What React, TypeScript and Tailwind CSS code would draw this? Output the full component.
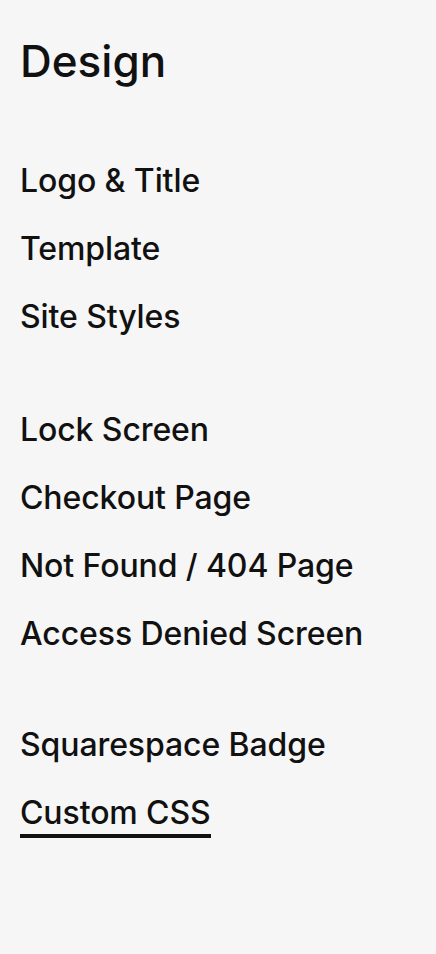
export default function App() {
  const groups = [
    { mt: "mt-[74px]", items: ["Logo & Title", "Template", "Site Styles"] },
    { mt: "mt-[75px]", items: ["Lock Screen", "Checkout Page", "Not Found / 404 Page", "Access Denied Screen"] },
    { mt: "mt-[73px]", items: ["Squarespace Badge", "Custom CSS"] },
  ];
  return (
    <div className="min-h-[954px] w-[436px] bg-[#f6f6f6] px-[20px] pt-[34px] text-[#111111]" style={{ fontFamily: "Inter, 'Liberation Sans', sans-serif" }}>
      <h1 className="text-[44px] font-medium leading-[54px]">Design</h1>
      {groups.map((g, i) => (
        <ul key={i} className={`${g.mt} flex flex-col gap-[30px]`}>
          {g.items.map((t) => (
            <li key={t} className="text-[32px] font-medium leading-[38px] tracking-[-0.1px]">
              {t === "Custom CSS" ? (
                <span className="border-b-[4px] border-[#111111] pb-[2px]">{t}</span>
              ) : (
                t
              )}
            </li>
          ))}
        </ul>
      ))}
    </div>
  );
}
